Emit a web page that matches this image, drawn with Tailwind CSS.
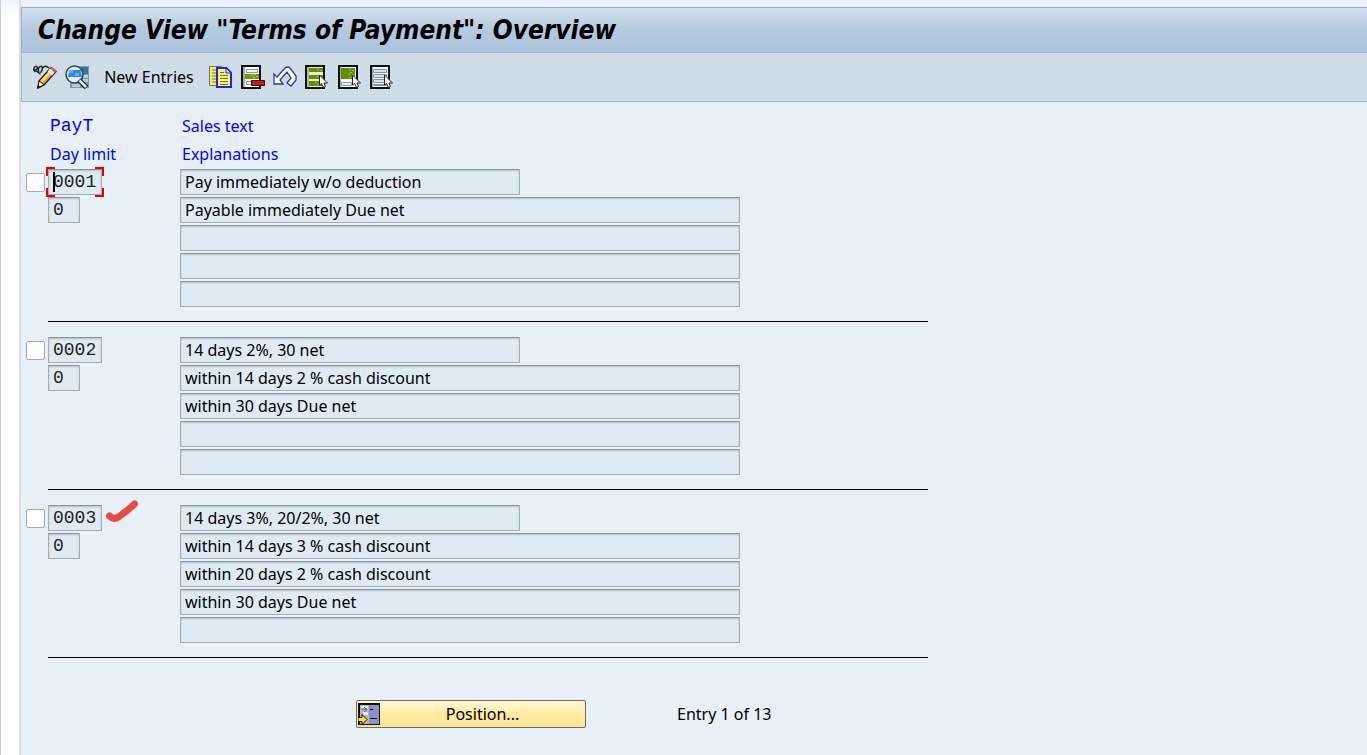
<!DOCTYPE html>
<html lang="en">
<head>
  <meta charset="UTF-8" />
  <meta name="viewport" content="width=device-width, initial-scale=1.0"/>
  <title>Change View "Terms of Payment": Overview</title>
  <script src="https://cdn.jsdelivr.net/npm/@tailwindcss/browser@4"></script>
</head>
<body class="min-h-screen flex bg-white font-['Noto_Sans',sans-serif] text-base text-black">

  <!-- Left window edge -->
  <div class="w-[19px] shrink-0 border-l border-[#c3cddd] bg-linear-to-b from-[#eff3f9] to-white to-[14px]"></div>

  <div class="flex-1 min-w-0 flex flex-col border-l-2 border-[#d6dde9] bg-[#e8f0f7]">
    <div class="h-[7px] bg-[#eff3f9]"></div>

    <!-- Title bar -->
    <header class="h-[45px] flex items-center pl-4 border-t border-l border-[#9fb1c8] bg-linear-to-b from-[#d3e1ed] via-[#b3c9de] to-[#abc3db]">
      <h1 class="text-[26px] font-bold italic font-['DejaVu_Sans_Condensed','DejaVu_Sans',sans-serif] whitespace-nowrap">Change View "Terms of Payment": Overview</h1>
    </header>

    <!-- Toolbar -->
    <div class="h-[50px] flex items-center gap-2 pl-[11px] border-y border-l border-[#a5b5ca] bg-[#cfdde8]">
      <button type="button" aria-label="Display/Change" class="size-6">
        <svg viewBox="0 0 24 24" class="size-6">
          <path d="M2 7C-1 3 3 0 4 2s-1 3-2 3l4 3C4 3 7 0 9 2S7 7 8 8M9 4c2-4 5-3 7-1" fill="none" stroke="#222" stroke-width="1.500"/>
          <path d="M6 16L18 2.500 23 6.500 11 20l-6 3z" fill="#fba62b" stroke="#222" stroke-width="1.400"/>
          <path d="M7.500 15.500L17 5l2 1.500L9.500 17z" fill="#ffe08a"/>
          <path d="M17 3l1.500-1.500 5 4L22 8z" fill="#e4573d"/>
          <path d="M14.500 6.500L17 3.500l4.500 4-2.500 3z" fill="#e8eef8"/>
          <path d="M6 16l5 3.500-6 3.500z" fill="#fff1cf" stroke="#222"/>
          <path d="M5 20l2.500 2L4 23.500z" fill="#111"/>
        </svg>
      </button>
      <button type="button" aria-label="Choose" class="size-6">
        <svg viewBox="0 0 24 24" class="size-6">
          <path d="M5 1h19v22H5z" fill="#8199aa"/>
          <path d="M16 2h7v7h-7z" fill="#2b73b5"/>
          <path d="M18 10h5v3h-5zM18 14h5v3h-5zM7 19h8v3H7z" fill="#bccbd6"/>
          <circle cx="9.500" cy="9.500" r="8.500" fill="#e4f1fb" stroke="#3a444e" stroke-width="1.500"/>
          <path d="M4 5h12l1 7H3z" fill="#2f8be6"/>
          <path d="M4 5h4v3H4zM10 8h4v3h-4z" fill="#63adf2"/>
          <path d="M14 15l7.500 7.500" stroke="#222" stroke-width="5"/>
          <path d="M14.500 15.500l6.500 6.500" stroke="#dfe5ea" stroke-width="2.500"/>
        </svg>
      </button>
      <button type="button" class="w-[104px] text-center whitespace-nowrap">New Entries</button>
      <button type="button" aria-label="Copy As" class="size-6">
        <svg viewBox="0 0 24 24" class="size-6">
          <path d="M.5 1.500h12v19H.5z" fill="#f4ef72" stroke="#77713c"/>
          <path d="M3 5h5M3 8h5M3 11h5M3 14h5M3 17h5" stroke="#77713c"/>
          <path d="M8 3h9.500l4.500 5v14H8z" fill="#f7f16b" stroke="#2222e0" stroke-width="2"/>
          <path d="M17 3v5h5z" fill="#dfe5ff" stroke="#2222e0"/>
          <path d="M11 7.500h4M11 10.500h8M11 13.500h8M11 16.500h8M11 19.500h8" stroke="#77713c"/>
        </svg>
      </button>
      <button type="button" aria-label="Delete" class="size-6">
        <svg viewBox="0 0 24 24" class="size-6">
          <path d="M1 1h18v22H1z" fill="#fff" stroke="#111" stroke-width="2"/>
          <path d="M2 2h2v20H2z" fill="#a9a9a9"/>
          <path d="M5.500 4.500h11v3h-11zM5.500 16.500h5v3h-5z" fill="#f6f8ff" stroke="#8d93b5"/>
          <path d="M4 9h14v5H4z" fill="#6b9c0a"/>
          <path d="M10 10h2v1h-2zM13 9h2v1h-2zM12 12h2v1h-2zM15 11h2v1h-2z" fill="#9ccb35"/>
          <path d="M10.500 15.500h13v5h-13z" fill="#f30808" stroke="#111"/>
        </svg>
      </button>
      <button type="button" aria-label="Undo Change" class="size-6">
        <svg viewBox="0 0 24 24" class="size-6">
          <path d="M1 19V9l3 3 8-9q3-2 5 0l6 8v4l-5 6-4-3 4-5-4-6-7 8 3 4z" fill="#fff" stroke="#3232a0" stroke-width="1.300"/>
        </svg>
      </button>
      <button type="button" aria-label="Select All" class="size-6">
        <svg viewBox="0 0 24 24" class="size-6">
          <path d="M1 1h18v22H1z" fill="#e9f0d8" stroke="#111" stroke-width="2"/>
          <path d="M2 2h2v20H2z" fill="#b5b5b5"/>
          <path d="M4 3h14v4H4zM4 10h14v4H4zM4 16h14v5H4z" fill="#5f8f00"/>
          <path d="M12 4h2v1h-2zM15 5h2v1h-2zM11 11h2v1h-2zM14 12h2v1h-2zM10 17h2v1h-2zM12 19h2v1h-2z" fill="#97c22f"/>
          <path d="M14.500 10v10l2-1.500 2 4 2-1-1.500-3.500h3.500z" fill="#fff" stroke="#222"/>
        </svg>
      </button>
      <button type="button" aria-label="Select Block" class="size-6">
        <svg viewBox="0 0 24 24" class="size-6">
          <path d="M2 1h18v22H2z" fill="#fff" stroke="#111" stroke-width="2"/>
          <path d="M3 2h1v20H3z" fill="#a9a9a9"/>
          <path d="M4 3h14v11H4z" fill="#5f8f00"/>
          <path d="M12 4h2v1h-2zM15 5h2v1h-2zM13 7h2v1h-2zM11 9h2v1h-2zM15 9h2v1h-2zM12 12h2v1h-2z" fill="#97c22f"/>
          <path d="M4.500 17.500h10v3h-10z" fill="#e3edf3" stroke="#7f9fb3"/>
          <path d="M15.500 10v10l2-1.500 2 4 2-1-1.500-3.500h3.500z" fill="#fff" stroke="#222"/>
        </svg>
      </button>
      <button type="button" aria-label="Deselect All" class="size-6">
        <svg viewBox="0 0 24 24" class="size-6">
          <path d="M2 1h18v22H2z" fill="#f5f7f8" stroke="#111" stroke-width="2"/>
          <path d="M3 2h1v20H3z" fill="#a9a9a9"/>
          <path d="M4.500 4.500h13v3h-13zM4.500 9.500h13v3h-13zM4.500 14.500h13v3h-13zM4.500 19.500h13v1h-13z" fill="#d8e5ed" stroke="#7695a9"/>
          <path d="M15.500 10v10l2-1.500 2 4 2-1-1.500-3.500h3.500z" fill="#fff" stroke="#222"/>
        </svg>
      </button>
    </div>

    <main class="flex-1 pl-[5px] pt-[11px] pb-6">
      <!-- Column headings -->
      <div class="flex flex-col gap-0.5 pl-6 text-[#0000ff]">
        <div class="h-[26px] flex items-center">
          <span class="w-[132px] font-['Liberation_Mono',monospace] text-lg">PayT</span>
          <span>Sales text</span>
        </div>
        <div class="h-[26px] flex items-center">
          <span class="w-[132px]">Day limit</span>
          <span>Explanations</span>
        </div>
      </div>

      <div id="terms"></div>

      <div class="flex items-center pl-[330px] pt-[29px]">
        <button type="button" class="w-[230px] h-7 flex items-center border border-[#6e6a5e] rounded-xs bg-linear-to-b from-[#fff8d6] via-[#ffeca0] to-[#fbe394] pl-px">
          <svg viewBox="0 0 22 22" class="size-[22px]">
            <path d="M1 1h20v20H1z" fill="#dfe7ee" stroke="#111" stroke-width="2"/>
            <path d="M2 2h9v19H2z" fill="#a9b9c6"/>
            <path d="M3 3h7v3H3zM5 9h5v3H5z" fill="#e9f3fa"/>
            <path d="M11 2h10v19H11z" fill="#8f8fc6"/>
            <path d="M3 6h6M6 4l3 2.500L6 9" fill="none" stroke="#556"/>
            <path d="M12 15.500h7M12 6.500h3" stroke="#111"/>
            <path d="M0 14.500h4v-3l5 5-5 5v-3H0z" fill="#ffe600" stroke="#111"/>
          </svg>
          <span class="flex-1 text-center">Position...</span>
        </button>
        <span class="ml-[91px]">Entry 1 of 13</span>
      </div>
    </main>
  </div>

  <script>
    const terms = [
      { code: '0001', limit: '0', text: 'Pay immediately w/o deduction', lines: ['Payable immediately Due net', '', '', ''] },
      { code: '0002', limit: '0', text: '14 days 2%, 30 net', lines: ['within 14 days 2 % cash discount', 'within 30 days Due net', '', ''] },
      { code: '0003', limit: '0', text: '14 days 3%, 20/2%, 30 net', lines: ['within 14 days 3 % cash discount', 'within 20 days 2 % cash discount', 'within 30 days Due net', ''] },
    ];

    const field = 'h-[26px] px-1 border border-[#a9adb0] border-t-[#8f9498] bg-[#deebf4] shadow-[inset_0_1px_2px_#b4bfc8] outline-none';
    const mono = "font-['Liberation_Mono',monospace] text-lg text-[#222222]";

    // red corners and caret around the focused key field
    const focusFrame = `
      <svg viewBox="0 0 58 30" class="absolute -left-0.5 -top-0.5 w-[58px] h-[30px] pointer-events-none">
        <path d="M1 9V1h8M49 1h8v8M57 21v8h-8M9 29H1v-8" fill="none" stroke="#e60000" stroke-width="2"/>
        <path d="M7 5h2v20H7z" fill="#000"/>
      </svg>`;

    const checkMark = `
      <svg viewBox="0 0 34 24" class="absolute left-[57px] -top-1.5 w-[34px] h-6 pointer-events-none">
        <path d="M4.500 17q4 4 9 1Q22 12 29.500 5" fill="none" stroke="#e84a44" stroke-width="7" stroke-linecap="round" stroke-linejoin="round"/>
      </svg>`;

    document.getElementById('terms').innerHTML = terms.map((t, i) => `
      <section class="mt-0.5">
        <div class="flex">
          <div class="w-[22px] h-[26px] flex items-center">
            <input type="checkbox" aria-label="Select ${t.code}" class="appearance-none size-[19px] bg-white border border-[#a9a9a9] rounded-xs"/>
          </div>
          <div class="w-[132px] flex flex-col gap-0.5">
            <div class="relative flex">
              <input aria-label="PayT" value="${t.code}" class="${field} ${mono} w-[54px]"/>
              ${i === 0 ? focusFrame : ''}
              ${i === 2 ? checkMark : ''}
            </div>
            <input aria-label="Day limit" value="${t.limit}" class="${field} ${mono} w-8"/>
          </div>
          <div class="flex-1 flex flex-col gap-0.5">
            <input aria-label="Sales text" value="${t.text}" class="${field} w-[340px]"/>
            ${t.lines.map(l => `<input aria-label="Explanation" value="${l}" class="${field} w-[560px]"/>`).join('')}
          </div>
        </div>
        <div class="h-7 flex items-center pl-[22px]">
          <hr class="w-[880px] border-black"/>
        </div>
      </section>`).join('');
  </script>
</body>
</html>
